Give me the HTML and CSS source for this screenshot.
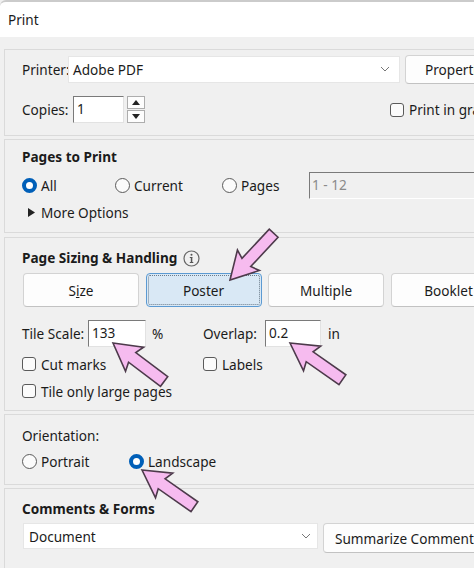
FILE: index.html
```html
<!DOCTYPE html>
<html>
<head>
<meta charset="utf-8">
<link rel="stylesheet" href="styles.css">
</head>
<body>
<div class="dialog">
  <div class="titlebar">Print</div>
  <div class="content">
    <div class="group g1">
      <div class="row printer-row">
        <span class="lbl lbl-printer">Printer:</span>
        <div class="select printer-select">
          <span class="select-text">Adobe PDF</span>
          <svg class="chev" width="10" height="6" viewBox="0 0 10 6"><path d="M1 1 L5 5 L9 1" fill="none" stroke="#777" stroke-width="1"/></svg>
        </div>
        <div class="btn props-btn">Properties</div>
      </div>
      <div class="row copies-row">
        <span class="lbl lbl-copies">Copies:</span>
        <div class="input copies-input">1</div>
        <div class="spinner">
          <div class="spin"><svg width="8" height="5" viewBox="0 0 8 5"><path d="M0 5 L4 0 L8 5 Z" fill="#222"/></svg></div>
          <div class="spin"><svg width="8" height="5" viewBox="0 0 8 5"><path d="M0 0 L4 5 L8 0 Z" fill="#222"/></svg></div>
        </div>
        <div class="check-item gray-item"><span class="checkbox"></span><span>Print in grayscale</span></div>
      </div>
    </div>

    <div class="group g2">
      <div class="title">Pages to Print</div>
      <div class="row radio-row">
        <div class="radio-item w-all"><span class="radio checked"></span><span>All</span></div>
        <div class="radio-item w-current"><span class="radio"></span><span>Current</span></div>
        <div class="radio-item w-pages"><span class="radio"></span><span>Pages</span></div>
        <div class="input disabled pages-input">1 - 12</div>
      </div>
      <div class="row more-row">
        <svg class="tri" width="7" height="9" viewBox="0 0 7 9"><path d="M0 0 L7 4.5 L0 9 Z" fill="#222"/></svg>
        <span>More Options</span>
      </div>
    </div>

    <div class="group g3">
      <div class="title title-info">Page Sizing &amp; Handling
        <svg class="info" width="17" height="17" viewBox="0 0 17 17"><circle cx="8.5" cy="8.5" r="7.5" fill="none" stroke="#666" stroke-width="1.2"/><rect x="7.8" y="7" width="1.5" height="5.5" fill="#555"/><rect x="6.8" y="12" width="3.5" height="1" fill="#555"/><rect x="6.8" y="7" width="2.5" height="1" fill="#555"/><circle cx="8.5" cy="4.8" r="1" fill="#555"/></svg>
      </div>
      <div class="row btn-row">
        <div class="btn mode-btn">S<span class="ul">i</span>ze</div>
        <div class="btn mode-btn selected">Poster</div>
        <div class="btn mode-btn">Multiple</div>
        <div class="btn mode-btn">Booklet</div>
      </div>
      <div class="row tile-row">
        <span class="lbl lbl-tile">Tile Scale:</span>
        <div class="input tile-input">133</div>
        <span class="unit unit-pct">%</span>
        <span class="lbl lbl-overlap">Overlap:</span>
        <div class="input overlap-input">0.2</div>
        <span class="unit unit-in">in</span>
      </div>
      <div class="row check-row">
        <div class="check-item w-cut"><span class="checkbox"></span><span>Cut marks</span></div>
        <div class="check-item"><span class="checkbox"></span><span>Labels</span></div>
      </div>
      <div class="row check-row">
        <div class="check-item"><span class="checkbox"></span><span>Tile only large pages</span></div>
      </div>
    </div>

    <div class="group g4">
      <div class="plain-title">Orientation:</div>
      <div class="row orient-row">
        <div class="radio-item w-portrait"><span class="radio"></span><span>Portrait</span></div>
        <div class="radio-item"><span class="radio checked"></span><span>Landscape</span></div>
      </div>
    </div>

    <div class="group g5">
      <div class="title">Comments &amp; Forms</div>
      <div class="row comments-row">
        <div class="select doc-select">
          <span class="select-text">Document</span>
          <svg class="chev" width="10" height="6" viewBox="0 0 10 6"><path d="M1 1 L5 5 L9 1" fill="none" stroke="#777" stroke-width="1"/></svg>
        </div>
        <div class="btn summarize-btn">Summarize Comments</div>
      </div>
    </div>
  </div>

  <svg class="arrows" width="474" height="568" viewBox="0 0 474 568">
    <defs>
      <path id="arrow" d="M0 0 L27 -15 L24 -6 L64 -6 L64 6 L24 6 L27 15 Z" fill="#f6bbef" stroke="#4d3a4b" stroke-width="1.6" stroke-linejoin="miter"/>
    </defs>
    <use href="#arrow" transform="translate(230 280) rotate(-47)"/>
    <use href="#arrow" transform="translate(113 343) rotate(37)"/>
    <use href="#arrow" transform="translate(290 343) rotate(35)"/>
    <use href="#arrow" transform="translate(142 470) rotate(35)"/>
  </svg>
</div>
</body>
</html>
```

FILE: styles.css
```css
html, body {
  margin: 0;
  padding: 0;
}
body {
  width: 474px;
  height: 568px;
  overflow: hidden;
  background: #f0f0f0;
  font-family: "Noto Sans", "Open Sans", sans-serif;
  font-size: 13.6px;
  color: #1b1b1b;
}
.dialog {
  position: relative;
  width: 474px;
  height: 568px;
  overflow: hidden;
}
.titlebar {
  height: 35px;
  background: #ffffff;
  border-top: 2px solid #cbcbcb;
  border-top-left-radius: 6px;
  padding-left: 8px;
  line-height: 35px;
  font-size: 13.6px;
}
.content {
  padding-left: 4px;
  padding-top: 12px;
}
.group {
  width: 560px;
  border: 1px solid #dadada;
  border-right: none;
  background: #f0f0f0;
  padding-left: 17px;
  box-sizing: border-box;
}
.g1 { padding-top: 5px; padding-bottom: 12px; }
.g2 { margin-top: 3px; padding-top: 7px; padding-bottom: 10px; }
.g3 { margin-top: 4px; padding-top: 10px; padding-bottom: 9px; }
.g4 { margin-top: 3px; padding-top: 11px; padding-bottom: 13px; }
.g5 { margin-top: 3px; padding-top: 10px; padding-bottom: 20px; }

.row {
  display: flex;
  align-items: center;
}
.lbl, .unit {
  flex: none;
  white-space: nowrap;
}
.title {
  font-weight: bold;
  height: 20px;
  line-height: 20px;
  display: flex;
  align-items: center;
}
.plain-title {
  height: 20px;
  line-height: 20px;
}
.info { margin-left: 6px; }

/* Printer row */
.printer-row { height: 28px; }
.lbl-printer { width: 46px; }
.select {
  background: #ffffff;
  border: 1px solid #e6e6e6;
  box-sizing: border-box;
  display: flex;
  align-items: center;
  justify-content: space-between;
  padding-left: 4px;
  padding-right: 9px;
  flex: none;
}
.printer-select { width: 332px; height: 27px; }
.chev { flex: none; }
.btn {
  background: #fdfdfd;
  border: 1px solid #d3d3d3;
  border-bottom-color: #c2c2c2;
  border-radius: 4px;
  box-sizing: border-box;
  display: flex;
  align-items: center;
  justify-content: center;
  white-space: nowrap;
  flex: none;
}
.props-btn {
  margin-left: 5px;
  width: 100px;
  height: 29px;
  justify-content: flex-start;
  padding-left: 19px;
}

/* Copies row */
.copies-row { margin-top: 13px; height: 27px; }
.lbl-copies { width: 51px; }
.input {
  background: #ffffff;
  border: 1px solid #e2e2e2;
  border-top-color: #7a7a7a;
  border-left-color: #7a7a7a;
  box-sizing: border-box;
  height: 27px;
  line-height: 24px;
  padding-left: 3px;
  flex: none;
}
.copies-input { width: 51px; }
.spinner {
  margin-left: 3px;
  width: 18px;
  height: 27px;
  display: flex;
  flex-direction: column;
  gap: 1px;
  flex: none;
}
.spin {
  flex: 1;
  background: #fdfdfd;
  border: 1px solid #adadad;
  display: flex;
  align-items: center;
  justify-content: center;
}
.gray-item { margin-left: 245px; }

.check-item, .radio-item {
  display: flex;
  align-items: center;
  white-space: nowrap;
  flex: none;
}
.checkbox {
  width: 14px;
  height: 14px;
  border: 1px solid #5a5a5a;
  border-radius: 3px;
  box-sizing: border-box;
  background: #fbfbfb;
  margin-right: 5px;
  flex: none;
}
.radio {
  width: 15px;
  height: 15px;
  border: 1px solid #5a5a5a;
  border-radius: 50%;
  box-sizing: border-box;
  background: #fbfbfb;
  margin-right: 4px;
  flex: none;
}
.radio.checked {
  border: 4.5px solid #005fb8;
  background: #ffffff;
}

/* Pages to print */
.radio-row { margin-top: 5px; height: 27px; }
.w-all { width: 93px; }
.w-current { width: 107px; }
.w-pages { width: 87px; }
.pages-input { width: 200px; }
.input.disabled {
  background: #f0f0f0;
  color: #8a8a8a;
  border-right-color: #ffffff;
  border-bottom-color: #ffffff;
  padding-left: 2px;
}
.more-row { margin-top: 3px; height: 20px; }
.tri { margin-left: 6px; margin-right: 6px; }

/* Page sizing */
.btn-row { margin-top: 5px; gap: 6.5px; padding-left: 1px; }
.mode-btn { width: 116px; height: 34px; }
.mode-btn.selected {
  background: #d9e8f5;
  border: 1px solid #5c9ad2;
  outline: 1px dotted #6b7b8a;
  outline-offset: -3px;
}
.ul { text-decoration: underline; }
.tile-row { margin-top: 13px; height: 27px; }
.lbl-tile { width: 66px; }
.tile-input { width: 58px; }
.unit-pct { width: 51px; padding-left: 6px; }
.lbl-overlap { width: 62px; }
.overlap-input { width: 56px; }
.unit-in { margin-left: 7px; }
.check-row { margin-top: 7px; height: 20px; }
.w-cut { width: 181px; }

/* Orientation */
.orient-row { margin-top: 5px; height: 20px; }
.w-portrait { width: 107px; }

/* Comments */
.comments-row { margin-top: 4px; height: 30px; align-items: flex-start; }
.doc-select { width: 295px; height: 26px; padding-left: 5px; padding-right: 6px; margin-left: 1px; }
.summarize-btn {
  margin-left: 5px;
  width: 180px;
  height: 30px;
  justify-content: flex-start;
  padding-left: 11px;
}

.arrows {
  position: absolute;
  left: 0;
  top: 0;
  pointer-events: none;
}
```
